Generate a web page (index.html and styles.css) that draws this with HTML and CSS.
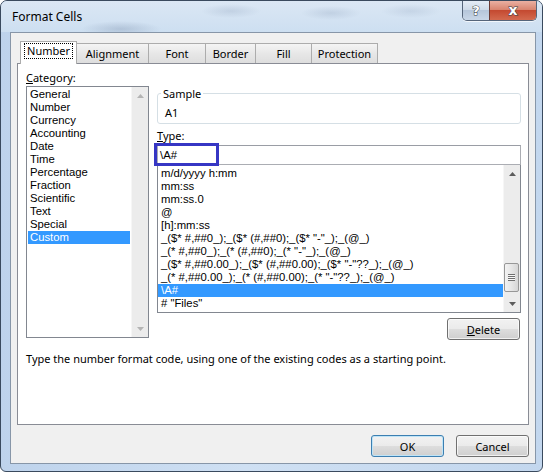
FILE: index.html
```html
<!DOCTYPE html>
<html>
<head>
<meta charset="utf-8">
<title>Format Cells</title>
<link rel="stylesheet" href="styles.css">
</head>
<body>
<div class="window">
  <div class="titlebar">
    <span class="title">Format Cells</span>
    <div class="caption">
      <div class="cap-btn help">?</div>
      <div class="cap-btn close">x</div>
    </div>
  </div>
  <div class="dialog">
    <div class="tabs">
      <div class="tab active w-number"><span class="focus">Number</span></div>
      <div class="tab w-align">Alignment</div>
      <div class="tab w-font">Font</div>
      <div class="tab w-border">Border</div>
      <div class="tab w-fill">Fill</div>
      <div class="tab w-prot">Protection</div>
    </div>
    <div class="panel">
      <div class="panel-main">
        <div class="cat-col">
          <div class="label"><u>C</u>ategory:</div>
          <div class="listbox cat-list">
            <div class="items">
              <div class="item">General</div>
              <div class="item">Number</div>
              <div class="item">Currency</div>
              <div class="item">Accounting</div>
              <div class="item">Date</div>
              <div class="item">Time</div>
              <div class="item">Percentage</div>
              <div class="item">Fraction</div>
              <div class="item">Scientific</div>
              <div class="item">Text</div>
              <div class="item">Special</div>
              <div class="item sel">Custom</div>
            </div>
            <div class="vscroll disabled">
              <div class="arrow"><svg width="7" height="4" viewBox="0 0 7 4"><polygon points="0,4 7,4 3.5,0"/></svg></div>
              <div class="track"></div>
              <div class="arrow"><svg width="7" height="4" viewBox="0 0 7 4"><polygon points="0,0 7,0 3.5,4"/></svg></div>
            </div>
          </div>
        </div>
        <div class="right-col">
          <fieldset class="sample">
            <legend>Sample</legend>
            <div class="sample-val">A1</div>
          </fieldset>
          <div class="label type-label"><u>T</u>ype:</div>
          <div class="type-input">\A#<span class="annot"></span></div>
          <div class="listbox fmt-list">
            <div class="items">
              <div class="item">m/d/yyyy h:mm</div>
              <div class="item">mm:ss</div>
              <div class="item">mm:ss.0</div>
              <div class="item">@</div>
              <div class="item">[h]:mm:ss</div>
              <div class="item">_($* #,##0_);_($* (#,##0);_($* "-"_);_(@_)</div>
              <div class="item">_(* #,##0_);_(* (#,##0);_(* "-"_);_(@_)</div>
              <div class="item">_($* #,##0.00_);_($* (#,##0.00);_($* "-"??_);_(@_)</div>
              <div class="item">_(* #,##0.00_);_(* (#,##0.00);_(* "-"??_);_(@_)</div>
              <div class="item sel">\A#</div>
              <div class="item"># "Files"</div>
            </div>
            <div class="vscroll">
              <div class="arrow"><svg width="7" height="4" viewBox="0 0 7 4"><polygon points="0,4 7,4 3.5,0"/></svg></div>
              <div class="track">
                <div class="thumb"><span class="grip"></span></div>
              </div>
              <div class="arrow"><svg width="7" height="4" viewBox="0 0 7 4"><polygon points="0,0 7,0 3.5,4"/></svg></div>
            </div>
          </div>
          <div class="delete-row"><button class="btn delete"><u>D</u>elete</button></div>
        </div>
      </div>
      <p class="desc">Type the number format code, using one of the existing codes as a starting point.</p>
    </div>
    <div class="footer">
      <button class="btn default">OK</button>
      <button class="btn">Cancel</button>
    </div>
  </div>
</div>
</body>
</html>
```

FILE: styles.css
```css
html, body {
  margin: 0;
  padding: 0;
  background: #ffffff;
}
body {
  font-family: "Noto Sans", "Open Sans", sans-serif;
  font-size: 11px;
  color: #000;
}

.window {
  width: 543px;
  height: 472px;
  box-sizing: border-box;
  border: 1px solid #3a4a5e;
  border-radius: 7px 7px 6px 6px;
  background: linear-gradient(to right, #bed3ec, #cfe0f3 45%, #c3d7ee);
  display: flex;
  flex-direction: column;
  overflow: hidden;
}

.titlebar {
  height: 31px;
  flex: none;
  display: flex;
  align-items: flex-start;
  background:
    radial-gradient(ellipse 40px 8px at 120px 28px, rgba(110,130,160,.30), transparent),
    radial-gradient(ellipse 30px 7px at 230px 10px, rgba(120,140,170,.22), transparent),
    radial-gradient(ellipse 30px 7px at 330px 12px, rgba(120,140,170,.22), transparent),
    radial-gradient(ellipse 30px 7px at 410px 10px, rgba(120,140,170,.18), transparent),
    linear-gradient(#dbe7f4, #cddff1);
}
.title {
  margin: 9px 0 0 11px;
  font-size: 12px;
  line-height: 14px;
}
.caption {
  margin-left: auto;
  margin-right: 5px;
  display: flex;
  height: 19px;
  border: 1px solid #56657a;
  border-top: none;
  border-radius: 0 0 5px 5px;
  overflow: hidden;
  box-shadow: 0 1px 0 rgba(255,255,255,.7);
}
.cap-btn {
  display: flex;
  align-items: center;
  justify-content: center;
  font-family: "DejaVu Sans", sans-serif;
  font-weight: bold;
  color: #fff;
  -webkit-text-stroke: 1px #3a3f48;
  paint-order: stroke fill;
}
.help {
  width: 26px;
  font-size: 13px;
  background: linear-gradient(#e4ecf6, #cfdbe9 45%, #b6c6da 50%, #c9d7e8);
}
.close {
  width: 47px;
  border-left: 1px solid #6b3b35;
  font-size: 14px;
  line-height: 14px;
  padding-bottom: 2px;
  box-sizing: border-box;
  background: linear-gradient(#eab0a2, #d98570 45%, #c44a31 50%, #d36a4f);
}

.dialog {
  margin: 0 6px 0 9px;
  height: 432px;
  flex: none;
  box-sizing: border-box;
  border: 1px solid #8796a8;
  background: #f0f0f0;
  padding: 8px 6px 0 6px;
  display: flex;
  flex-direction: column;
}

.tabs {
  display: flex;
  align-items: flex-end;
  height: 22px;
  padding-left: 3px;
  flex: none;
}
.tab {
  height: 20px;
  box-sizing: border-box;
  border: 1px solid #acacac;
  border-bottom: none;
  background: linear-gradient(#f4f4f4, #e6e6e6 55%, #dedede);
  text-align: center;
  line-height: 19px;
}
.tab + .tab { margin-left: -1px; }
.tab.active {
  height: 23px;
  margin-bottom: -1px;
  background: #fff;
  position: relative;
  z-index: 1;
  padding-top: 1px;
  line-height: 14px;
}
.focus {
  display: inline-block;
  border: 1px dotted #000;
  padding: 0 2px;
  line-height: 14px;
}
.w-number { width: 57px; }
.w-align { width: 73px; }
.w-font { width: 58px; }
.w-border { width: 51px; }
.w-fill { width: 57px; }
.w-prot { width: 67px; }

.panel {
  height: 362px;
  flex: none;
  box-sizing: border-box;
  border: 1px solid #898c95;
  background: #fff;
  padding: 7px 0 0 8px;
}
.panel-main {
  display: flex;
  align-items: flex-start;
}
.label {
  line-height: 13px;
}
.label u { text-decoration-thickness: 1px; text-underline-offset: 1px; }

.cat-col {
  width: 123px;
  flex: none;
}
.listbox {
  box-sizing: border-box;
  border: 1px solid #828790;
  background: #fff;
  display: flex;
}
.cat-list {
  margin-top: 2px;
  height: 252px;
}
.items {
  flex: 1;
  min-width: 0;
  padding: 1px;
  overflow: hidden;
  font-family: "Liberation Sans", Arial, sans-serif;
  font-size: 11.3px;
}
.item {
  line-height: 13px;
  height: 13px;
  padding-left: 2px;
  white-space: pre;
  overflow: hidden;
}
.item.sel {
  background: #3399ff;
  color: #fff;
}

.vscroll {
  width: 17px;
  flex: none;
  display: flex;
  flex-direction: column;
  background: #ececec;
  border-left: 1px solid #f6f6f6;
  box-sizing: border-box;
}
.vscroll .arrow {
  height: 17px;
  display: flex;
  align-items: center;
  justify-content: center;
}
.vscroll .arrow svg { fill: #5c5c5c; }
.vscroll.disabled .arrow svg { fill: #b4b4b4; }
.vscroll .track {
  flex: 1;
  display: flex;
  flex-direction: column;
  justify-content: flex-end;
  padding-bottom: 3px;
}
.thumb {
  height: 29px;
  margin: 0 1px 0 0;
  box-sizing: border-box;
  border: 1px solid #979797;
  border-radius: 2px;
  background: linear-gradient(to right, #f3f3f3, #e6e6e6 50%, #d6d6d6);
  display: flex;
  align-items: center;
  justify-content: center;
}
.grip {
  width: 7px;
  height: 7px;
  background: repeating-linear-gradient(#6f6f6f 0 1px, #f8f8f8 1px 2px);
}

.right-col {
  width: 364px;
  flex: none;
  margin-left: 8px;
  margin-top: 16px;
}
.sample {
  margin: 0;
  padding: 0 0 4px 3px;
  border: 1px solid #d5dfe5;
  border-radius: 3px;
  min-width: 0;
}
.sample legend {
  padding: 0 2px;
  line-height: 13px;
}
.sample-val {
  margin: 6px 0 0 4px;
  line-height: 13px;
}
.type-label {
  margin-top: 5px;
}
.type-input {
  position: relative;
  margin-top: 3px;
  height: 20px;
  box-sizing: border-box;
  border: 1px solid #abadb3;
  border-top-color: #9a9da5;
  padding-left: 2px;
  line-height: 18px;
  font-family: "Liberation Sans", Arial, sans-serif;
  font-size: 11.3px;
}
.annot {
  position: absolute;
  left: -4px;
  top: -3px;
  width: 65px;
  height: 23px;
  box-sizing: border-box;
  border: 3px solid #3636c4;
}
.fmt-list {
  margin-top: -1px;
  height: 149px;
}
.fmt-list .items {
  padding: 2px 0 0 0;
}
.fmt-list .item {
  padding-left: 3px;
}

.delete-row {
  display: flex;
  justify-content: flex-end;
  margin-top: 5px;
  padding-right: 1px;
}
.btn {
  font-family: "Noto Sans", "Open Sans", sans-serif;
  font-size: 11px;
  color: #000;
  width: 73px;
  height: 22px;
  padding: 0;
  box-sizing: border-box;
  border: 1px solid #707070;
  border-radius: 3px;
  background: linear-gradient(#f2f2f2, #ebebeb 48%, #dddddd 52%, #cfcfcf);
  box-shadow: inset 0 0 0 1px rgba(255,255,255,.7);
}
.btn.delete { width: 73px; }
.btn.default {
  border-color: #3c7fb1;
  box-shadow: inset 0 0 0 1px #bfe4f7;
}

.desc {
  margin: 12px 0 0 0;
  line-height: 13px;
}

.footer {
  display: flex;
  justify-content: flex-end;
  gap: 12px;
  margin-top: 10px;
}
```
